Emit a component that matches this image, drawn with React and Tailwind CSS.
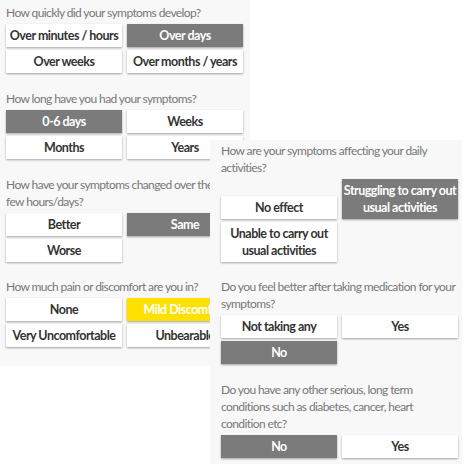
import React from "react";

const font = { fontFamily: "Lato, 'Open Sans', sans-serif" };

function Opt({ label, active, yellow }) {
  const base =
    "flex min-h-[23px] w-[116px] items-center justify-center whitespace-nowrap px-1 py-[3px] text-center text-[12.5px] font-bold leading-[17px] tracking-[-0.5px] shadow-[0_1px_2px_rgba(0,0,0,0.35)]";
  const tone = yellow
    ? "bg-[#ffe100] text-white"
    : active
    ? "bg-[#7b7b7b] text-white"
    : "bg-white text-[#333]";
  return <div className={`${base} ${tone}`}>{label}</div>;
}

function Question({ text, options, mt }) {
  return (
    <div className={mt}>
      <p className="whitespace-nowrap text-[12px] leading-[17px] tracking-[-0.6px] text-[#777]">{text}</p>
      <div className="mt-[3px] flex w-[240px] flex-wrap items-end gap-x-[5px] gap-y-[3px]">
        {options.map((o, i) => (
          <Opt key={i} {...o} />
        ))}
      </div>
    </div>
  );
}

export default function App() {
  return (
    <div className="relative h-[464px] w-[474px] overflow-hidden bg-white" style={font}>
      {/* left panel */}
      <div className="h-[366px] w-[250px] overflow-hidden bg-[#f8f8f8] pl-[6px] pt-[4px]">
        <Question
          text="How quickly did your symptoms develop?"
          options={[
            { label: "Over minutes / hours" },
            { label: "Over days", active: true },
            { label: "Over weeks" },
            { label: "Over months / years" },
          ]}
        />
        <Question
          mt="mt-[17px]"
          text="How long have you had your symptoms?"
          options={[
            { label: "0-6 days", active: true },
            { label: "Weeks" },
            { label: "Months" },
            { label: "Years" },
          ]}
        />
        <Question
          mt="mt-[17px]"
          text={
            <>
              How have your symptoms changed over the
              <br />
              few hours/days?
            </>
          }
          options={[
            { label: "Better" },
            { label: "Same", active: true },
            { label: "Worse" },
          ]}
        />
        <Question
          mt="mt-[16px]"
          text="How much pain or discomfort are you in?"
          options={[
            { label: "None" },
            { label: "Mild Discomfort", yellow: true },
            { label: "Very Uncomfortable" },
            { label: "Unbearable" },
          ]}
        />
      </div>

      {/* right panel, overlapping */}
      <div className="absolute left-[210px] top-[140px] h-[324px] w-[252px] bg-[#f8f8f8] pl-[11px] pt-[2px]">
        <Question
          text={
            <>
              How are your symptoms affecting your daily
              <br />
              activities?
            </>
          }
          options={[
            { label: "No effect" },
            {
              label: (
                <>
                  Struggling to carry out
                  <br />
                  usual activities
                </>
              ),
              active: true,
            },
            {
              label: (
                <>
                  Unable to carry out
                  <br />
                  usual activities
                </>
              ),
            },
          ]}
        />
        <Question
          mt="mt-[16px]"
          text={
            <>
              Do you feel better after taking medication for your
              <br />
              symptoms?
            </>
          }
          options={[
            { label: "Not taking any" },
            { label: "Yes" },
            { label: "No", active: true },
          ]}
        />
        <Question
          mt="mt-[17px]"
          text={
            <>
              Do you have any other serious, long term
              <br />
              conditions such as diabetes, cancer, heart
              <br />
              condition etc?
            </>
          }
          options={[{ label: "No", active: true }, { label: "Yes" }]}
        />
      </div>
    </div>
  );
}
